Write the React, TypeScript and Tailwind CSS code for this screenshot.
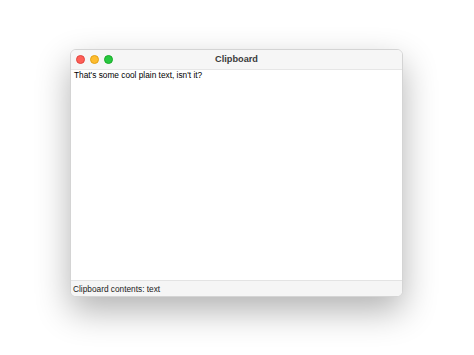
import React from "react";

const TrafficLights = () => (
  <div className="absolute left-[5px] top-0 flex h-full items-center gap-[5px]">
    <span className="h-[9px] w-[9px] rounded-full bg-[#fe5f57] border border-[#e2463f]" />
    <span className="h-[9px] w-[9px] rounded-full bg-[#febc2e] border border-[#e1a116]" />
    <span className="h-[9px] w-[9px] rounded-full bg-[#28c840] border border-[#1aab29]" />
  </div>
);

const App = () => {
  return (
    <div
      className="h-[355px] w-[474px] bg-white pl-[70px] pt-[49px]"
      style={{ fontFamily: '"Liberation Sans", Arial, sans-serif' }}
    >
      <div className="flex h-[248px] w-[333px] flex-col overflow-hidden rounded-[6px] border border-[#d4d4d4] bg-white shadow-[0_14px_34px_rgba(0,0,0,0.3)]">
        <div className="relative flex h-[20px] shrink-0 items-center justify-center border-b border-[#e6e6e6] bg-[#f6f6f6]">
          <TrafficLights />
          <span className="text-[9.2px] font-bold text-[#3b3b3b]">Clipboard</span>
        </div>
        <div className="flex-1 px-[3px] pt-[0px] text-[8.3px] leading-[10px] text-black">
          That's some cool plain text, isn't it?
        </div>
        <div className="flex h-[16px] shrink-0 items-center border-t border-[#e3e3e3] bg-[#f5f5f5] px-[2px] pt-[2px] text-[8.3px] text-[#1a1a1a]">
          Clipboard contents: text
        </div>
      </div>
    </div>
  );
};

export default App;
